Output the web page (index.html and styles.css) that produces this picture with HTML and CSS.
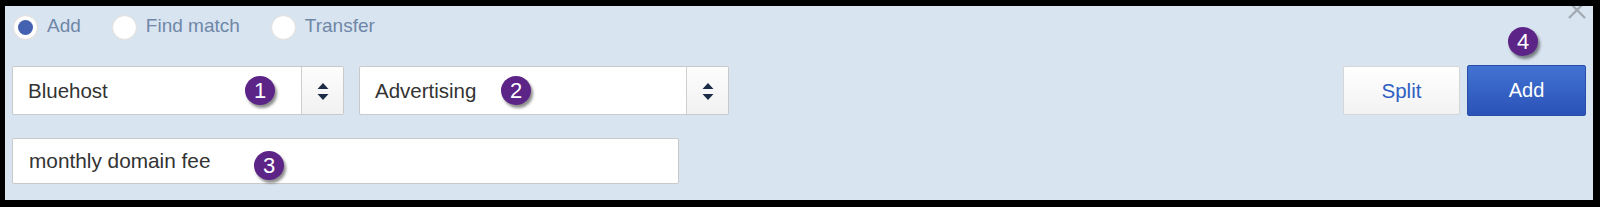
FILE: index.html
```html
<!DOCTYPE html>
<html>
<head>
<meta charset="utf-8">
<link rel="stylesheet" href="styles.css">
</head>
<body>
<div class="panel">
  <div class="radios">
    <label class="radio"><span class="dot checked"></span><span class="lbl">Add</span></label>
    <label class="radio"><span class="dot"></span><span class="lbl">Find match</span></label>
    <label class="radio"><span class="dot"></span><span class="lbl">Transfer</span></label>
  </div>
  <div class="row">
    <div class="select s1"><span class="val">Bluehost</span><span class="arrows"><svg width="12" height="17" viewBox="0 0 12 17"><path d="M6 0 L11.5 6 L0.5 6 Z" fill="#1c2c46"/><path d="M6 17 L11.5 11 L0.5 11 Z" fill="#1c2c46"/></svg></span></div>
    <div class="select s2"><span class="val">Advertising</span><span class="arrows"><svg width="12" height="17" viewBox="0 0 12 17"><path d="M6 0 L11.5 6 L0.5 6 Z" fill="#1c2c46"/><path d="M6 17 L11.5 11 L0.5 11 Z" fill="#1c2c46"/></svg></span></div>
    <div class="actions">
      <button class="btn split">Split</button>
      <button class="btn add">Add</button>
    </div>
  </div>
  <div class="row3">
    <div class="memo">monthly domain fee</div>
  </div>
  <span class="badge b1">1</span>
  <span class="badge b2">2</span>
  <span class="badge b3">3</span>
  <span class="badge b4">4</span>
  <svg class="close" width="20" height="22" viewBox="0 0 20 22"><path d="M2 3 L18 19 M18 3 L2 19" stroke="#a3abb4" stroke-width="2.4" fill="none"/></svg>
</div>
</body>
</html>
```

FILE: styles.css
```css
html, body {
  margin: 0;
  padding: 0;
  background: #000;
}
body {
  width: 1600px;
  height: 207px;
  overflow: hidden;
  font-family: "Liberation Sans", Arial, sans-serif;
}
.panel {
  position: relative;
  box-sizing: border-box;
  margin: 6px 7px 0 5px;
  height: 194px;
  background: #d9e4f1;
  padding: 9px 7px 0 7px;
  overflow: hidden;
}
.radios {
  display: flex;
  align-items: center;
  height: 25px;
  gap: 31px;
  padding-left: 1px;
}
.radio {
  display: flex;
  align-items: center;
  gap: 9px;
}
.dot {
  box-sizing: border-box;
  width: 25px;
  height: 25px;
  border-radius: 50%;
  background: #fff;
  border: 1px solid #e2ddd8;
  display: flex;
  align-items: center;
  justify-content: center;
}
.dot.checked::after {
  content: "";
  width: 15px;
  height: 15px;
  border-radius: 50%;
  background: #4462b1;
}
.lbl {
  font-size: 19px;
  color: #6e87a7;
  padding-bottom: 4px;
}
.row {
  display: flex;
  align-items: center;
  height: 51px;
  margin-top: 25px;
  gap: 15px;
}
.select {
  box-sizing: border-box;
  height: 49px;
  display: flex;
  background: #fff;
  border: 1px solid #c9c9c9;
  border-radius: 2px;
}
.s1 { width: 332px; }
.s2 { width: 370px; }
.val {
  flex: 1;
  display: flex;
  align-items: center;
  padding-left: 15px;
  font-size: 20.5px;
  color: #333;
}
.arrows {
  width: 42px;
  border-left: 1px solid #cfcfcf;
  background: linear-gradient(#fdfdfd, #f1f1f1);
  display: flex;
  align-items: center;
  justify-content: center;
  padding-top: 2px;
  box-sizing: border-box;
}
.actions {
  margin-left: auto;
  display: flex;
  align-items: center;
  gap: 7px;
}
.btn {
  font-family: "Liberation Sans", Arial, sans-serif;
  font-size: 20.5px;
  border-radius: 2px;
  cursor: pointer;
}
.split {
  width: 117px;
  height: 49px;
  background: linear-gradient(#ffffff, #f2f2f2);
  border: 1px solid #d6d6d6;
  color: #2e60c2;
}
.add {
  width: 119px;
  height: 51px;
  background: linear-gradient(#4173d3, #2b52b6);
  border: 1px solid #2a4ea8;
  color: #fff;
  font-size: 20px;
}
.row3 {
  margin-top: 22px;
  display: flex;
}
.memo {
  box-sizing: border-box;
  width: 667px;
  height: 46px;
  background: #fff;
  border: 1px solid #c9c9c9;
  border-radius: 2px;
  display: flex;
  align-items: center;
  padding-left: 16px;
  font-size: 20.8px;
  color: #333;
}
.badge {
  position: absolute;
  width: 30px;
  height: 29px;
  border-radius: 50%;
  background: #5d2488;
  color: #fff;
  font-size: 22px;
  display: flex;
  align-items: center;
  justify-content: center;
  box-shadow: 2px 3px 3px rgba(0, 0, 0, 0.45);
}
.b1 { left: 240px; top: 70px; }
.b2 { left: 496px; top: 70px; }
.b3 { left: 249px; top: 145px; }
.b4 { left: 1503px; top: 21px; }
.close {
  position: absolute;
  left: 1562px;
  top: -7px;
}
```
